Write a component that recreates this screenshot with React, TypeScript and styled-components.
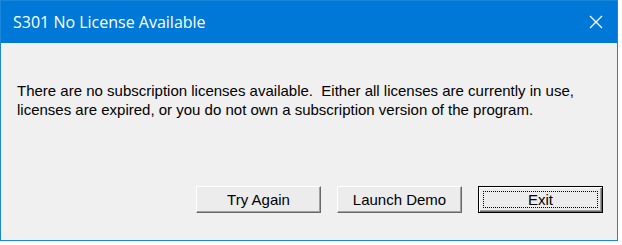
import { createGlobalStyle, styled } from "styled-components";

const GlobalStyle = createGlobalStyle`
  html, body {
    margin: 0;
    padding: 0;
    background: #ffffff;
  }
`;

const Window = styled.div`
  width: 616px;
  height: 239px;
  border: 1px solid #1a86d9;
  background: #f0f0f0;
  display: flex;
  flex-direction: column;
`;

const TitleBar = styled.div`
  height: 42px;
  background: #0078d7;
  display: flex;
  align-items: center;
  justify-content: space-between;
  padding: 0 0 0 12px;
  color: #ffffff;
  font-family: "Open Sans", "Noto Sans", sans-serif;
  font-size: 16px;
`;

const CloseButton = styled.div`
  width: 42px;
  height: 42px;
  display: flex;
  align-items: center;
  justify-content: center;
`;

const Client = styled.div`
  flex: 1;
  display: flex;
  flex-direction: column;
  padding: 38px 14px 27px 16px;
  font-family: "Liberation Sans", Arial, sans-serif;
  font-size: 15px;
  color: #000000;
`;

const Message = styled.p`
  margin: 0;
  line-height: 19px;
  white-space: pre;
  flex: 1;
`;

const ButtonRow = styled.div`
  display: flex;
  justify-content: flex-end;
  gap: 16px;
`;

const Button = styled.button<{ $default?: boolean }>`
  width: 125px;
  height: 27px;
  background: #ececec;
  font-family: "Liberation Sans", Arial, sans-serif;
  font-size: 15px;
  color: #000000;
  padding: 0;
  border: 1px solid;
  border-color: ${(p) => (p.$default ? "#000000" : "#ffffff #696969 #696969 #ffffff")};
  box-shadow: ${(p) =>
    p.$default
      ? "inset 1px 1px 0 #ffffff, inset -1px -1px 0 #696969, inset -2px -2px 0 #a0a0a0"
      : "inset -1px -1px 0 #a0a0a0"};
  position: relative;
`;

const FocusRing = styled.span`
  position: absolute;
  inset: 4px;
  border: 1px dotted #000000;
`;

export default function App() {
  return (
    <>
      <GlobalStyle />
      <Window>
        <TitleBar>
          <span>S301 No License Available</span>
          <CloseButton>
            <svg width="14" height="14" viewBox="0 0 14 14">
              <path d="M1 1L13 13M13 1L1 13" stroke="#ffffff" strokeWidth="1.3" />
            </svg>
          </CloseButton>
        </TitleBar>
        <Client>
          <Message>
            {"There are no subscription licenses available.  Either all licenses are currently in use,\nlicenses are expired, or you do not own a subscription version of the program."}
          </Message>
          <ButtonRow>
            <Button>Try Again</Button>
            <Button>Launch Demo</Button>
            <Button $default>
              <FocusRing />
              Exit
            </Button>
          </ButtonRow>
        </Client>
      </Window>
    </>
  );
}
